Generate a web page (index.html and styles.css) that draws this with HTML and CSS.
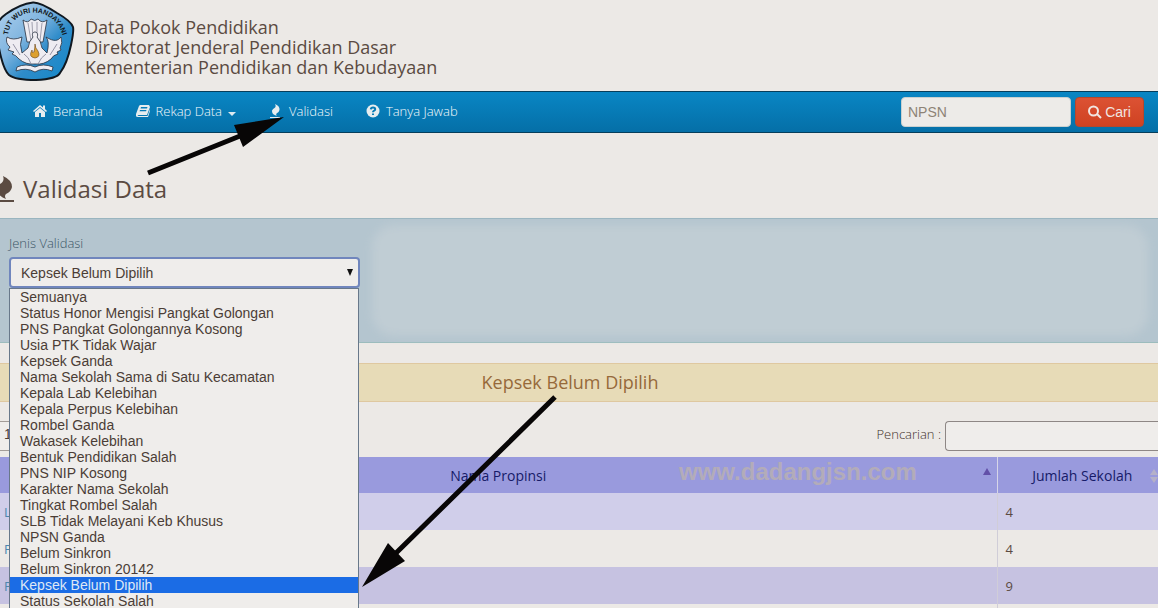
FILE: index.html
```html
<!DOCTYPE html>
<html lang="id">
<head>
  <meta charset="UTF-8">
  <meta name="viewport" content="width=device-width, initial-scale=1.0">
  <title>Validasi Data - Data Pokok Pendidikan</title>
  <link rel="stylesheet" href="styles.css">
</head>
<body>
  <header class="site-header">
    <svg class="logo" viewBox="0 0 76 84" role="img" aria-label="Tut Wuri Handayani">
      <defs>
        <linearGradient id="logoBlue" x1="0" y1="0" x2="1" y2="1">
          <stop offset="0" stop-color="#b5d4ef"/>
          <stop offset=".4" stop-color="#7fb4df"/>
          <stop offset=".62" stop-color="#2f8cca"/>
          <stop offset="1" stop-color="#1187c9"/>
        </linearGradient>
        <path id="logoArc" d="M8 35 C11 5 59 3 64 42"/>
      </defs>
      <path d="M-3 25 Q-1 19 6 14 Q20 4 33 2.500 Q40 2 57 13 Q71 21 73 27 Q74 31 71 45 Q67 64 60 73 Q57 79 36 80 Q15 80 9 75 Q3 69 -1 48 Q-4 32 -3 25Z" fill="url(#logoBlue)" stroke="#101820" stroke-width="2"/>
      <text class="logo-text"><textPath href="#logoArc">TUT WURI HANDAYANI</textPath></text>
      <g fill="#eeecf2" stroke="#27303f" stroke-width=".8" stroke-linejoin="round">
        <path d="M23 20 Q28 24 31 19 Q35 22 38 19 Q42 24 47 20 L43 42 H27Z"/>
        <path d="M28 23 L31 41 M32 22 L33 41 M37 22 L37 41 M42 23 L40 41" fill="none" stroke="#8b8b9c"/>
        <path d="M35 32 C38 32 38 36 37 37 Q41 41 42 48 L47 53 Q50 41 46 37 C54 42 58 41 61 37 Q63 43 60 48 L61 50 L57 52 L58 54 Q53 55 51 59 Q44 65 35 64 Q26 65 19 59 Q16 55 12 54 L14 52 L8 50 L10 47 Q5 43 7 37 Q13 41 22 37 Q19 44 22 53 L28 48 Q29 41 33 37 C32 35 32 32 35 32Z"/>
        <path d="M24 54 Q29 57 31 64 M46 54 Q41 57 38 64 M13 44 L20 55 M57 44 L50 55" fill="none" stroke="#7d7c92"/>
        <path d="M17 67 Q26 63 35 67 Q43 63 53 67 L52 71 Q43 67 35 72 Q26 67 16 71Z"/>
      </g>
      <path d="M35 44 Q35 48 38 51 Q41 57 35 58 Q28 57 32 50 Q32 54 34 52 Q35 48 35 44Z" fill="#dda02e" stroke="#674217" stroke-width=".6"/>
    </svg>
    <div class="site-name">
      Data Pokok Pendidikan<br>
      Direktorat Jenderal Pendidikan Dasar<br>
      Kementerian Pendidikan dan Kebudayaan
    </div>
  </header>

  <nav class="navbar">
    <a href="#"><svg class="icon" viewBox="0 0 14 14"><path d="M7 1 L0 7 L1 8 L7 3 L13 8 L14 7 L12 5 V1.500 H10 V3.500Z M7 4 L2 8 V13 H6 V9 H8 V13 H12 V8Z"/></svg>Beranda</a>
    <a href="#"><svg class="icon" viewBox="0 0 14 14"><path fill-rule="evenodd" d="M4 1 H13 L14 3 L11 11 H2 Q1 12 3 12 H11.500 L14 5 V7 L12 13 H2 Q-1 13 0 10 L3 2Z M5 3 L4.500 4.500 H11 L11.500 3Z M4 6 L3.500 7.200 H10 L10.500 6Z"/></svg>Rekap Data<span class="caret"></span></a>
    <a href="#"><svg class="icon" viewBox="0 0 14 14"><path d="M6 0 Q11 2 10.500 6 Q10 8.500 7.500 9.500 Q6.500 11 8 12 Q2.500 10.500 3 6.500 Q4 4.500 5.500 4 Q7.500 2.500 6 0Z M1 13 H11 V14 H1Z"/></svg>Validasi</a>
    <a href="#"><svg class="icon" viewBox="0 0 14 14"><circle cx="7" cy="7" r="6.500"/><path class="icon-line" d="M4.800 5.300 Q5 3.500 7 3.500 Q9.200 3.500 9.200 5.200 Q9.200 6.300 7.800 6.900 Q7 7.300 7 8.300 M7 9.400 V11"/></svg>Tanya Jawab</a>
    <form class="search">
      <input type="text" placeholder="NPSN" aria-label="NPSN">
      <button type="button"><svg class="icon" viewBox="0 0 14 14"><path class="icon-search" d="M10 6 A4.500 4.500 0 1 1 1 6 A4.500 4.500 0 1 1 10 6Z M9 9 L13 13"/></svg>Cari</button>
    </form>
  </nav>

  <main>
    <h1 class="page-title">
      <svg class="title-icon" viewBox="0 0 16 28"><path d="M3 1 Q12 5 12 12 Q11 17 6 19 Q4 21 6 24 Q-3 20 -4 14 Q-4 11 0 9 Q5 6 3 1Z M-6 25 H14 V27 H-6Z"/></svg>
      Validasi Data
    </h1>

    <section class="filter-panel">
      <div class="field">
        <label for="jenis">Jenis Validasi</label>
        <div class="dropdown">
          <select id="jenis">
            <option>Kepsek Belum Dipilih</option>
          </select>
          <ul class="options" role="listbox" aria-label="Jenis Validasi">
            <li role="option">Semuanya</li>
            <li role="option">Status Honor Mengisi Pangkat Golongan</li>
            <li role="option">PNS Pangkat Golongannya Kosong</li>
            <li role="option">Usia PTK Tidak Wajar</li>
            <li role="option">Kepsek Ganda</li>
            <li role="option">Nama Sekolah Sama di Satu Kecamatan</li>
            <li role="option">Kepala Lab Kelebihan</li>
            <li role="option">Kepala Perpus Kelebihan</li>
            <li role="option">Rombel Ganda</li>
            <li role="option">Wakasek Kelebihan</li>
            <li role="option">Bentuk Pendidikan Salah</li>
            <li role="option">PNS NIP Kosong</li>
            <li role="option">Karakter Nama Sekolah</li>
            <li role="option">Tingkat Rombel Salah</li>
            <li role="option">SLB Tidak Melayani Keb Khusus</li>
            <li role="option">NPSN Ganda</li>
            <li role="option">Belum Sinkron</li>
            <li role="option">Belum Sinkron 20142</li>
            <li role="option" class="selected" aria-selected="true">Kepsek Belum Dipilih</li>
            <li role="option">Status Sekolah Salah</li>
          </ul>
        </div>
      </div>
      <div class="panel-glow"></div>
    </section>

    <h2 class="alert">Kepsek Belum Dipilih</h2>

    <div class="table-tools">
      <select class="page-length" aria-label="Jumlah baris">
        <option>10</option>
      </select>
      <label for="cari">Pencarian :</label>
      <input type="text" id="cari">
    </div>

    <table>
      <thead>
        <tr>
          <th>Nama Propinsi<span class="sort-up"></span></th>
          <th class="count">Jumlah Sekolah<svg class="sort-both" viewBox="0 0 8 14"><path d="M4 0 L8 6 H0Z M4 14 L8 8 H0Z"/></svg></th>
        </tr>
      </thead>
      <tbody>
        <tr><td><a href="#">L</a></td><td>4</td></tr>
        <tr><td><a href="#">P</a></td><td>4</td></tr>
        <tr><td><a href="#">P</a></td><td>9</td></tr>
        <tr><td></td><td></td></tr>
      </tbody>
    </table>
  </main>

  <div class="watermark">www.dadangjsn.com</div>

  <svg class="arrows" width="1158" height="608" aria-hidden="true">
    <path d="M148 173 L245 134 M555 397 L394 555"/>
    <path class="arrow-head" d="M284 117 L234 125 L243 147Z M362 587 L388 543 L405 561Z"/>
  </svg>
</body>
</html>
```

FILE: styles.css
```css
* {
  box-sizing: border-box;
}
body {
  position: relative;
  height: 100vh;
  margin: 0;
  overflow: hidden;
  background: #ece9e6;
  color: #5b4b42;
  font-family: "Open Sans", "Noto Sans", sans-serif;
  font-size: 13px;
}
input, select, button {
  font-family: "Liberation Sans", Arial, sans-serif;
  font-size: 14px;
  color: #4b3d36;
}

/* header */
.site-header {
  display: flex;
  gap: 9px;
  height: 91px;
}
.logo {
  width: 76px;
  height: 84px;
}
.logo-text {
  font: bold 7px "Liberation Sans", sans-serif;
  fill: #101820;
}
.site-name {
  padding-top: 17px;
  font-size: 18px;
  line-height: 20px;
}

/* navigation */
.navbar {
  display: flex;
  align-items: center;
  gap: 33px;
  height: 42px;
  padding: 0 14px 0 33px;
  border-top: 1px solid #063e5b;
  border-bottom: 1px solid #063e5b;
  background: linear-gradient(#0986c4, #056fa7);
}
.navbar a {
  display: flex;
  align-items: center;
  gap: 6px;
  padding-bottom: 2px;
  color: #f4fafc;
  font-weight: 300;
  text-decoration: none;
}
.icon {
  width: 14px;
  height: 14px;
  fill: #e7edef;
}
.icon-line {
  fill: none;
  stroke: #087bb5;
  stroke-width: 2;
}
.icon-search {
  fill: none;
  stroke: #f1e6e1;
  stroke-width: 2;
}
.caret {
  margin-top: 5px;
  border: 4px solid transparent;
  border-top-color: #dceaf0;
  border-bottom: 0;
}
.search {
  display: flex;
  gap: 4px;
  margin-left: auto;
}
.search input {
  width: 170px;
  height: 30px;
  padding: 0 6px;
  border: 1px solid #c9d0d0;
  border-radius: 4px;
  background: #edebe8;
}
.search input::placeholder {
  color: #8d8376;
}
.search button {
  display: flex;
  align-items: center;
  justify-content: center;
  gap: 3px;
  width: 69px;
  height: 30px;
  padding: 0;
  border: 1px solid #b5472d;
  border-radius: 4px;
  background: linear-gradient(#dc5233, #cf4222);
  color: #f1e6e1;
}

/* content */
.page-title {
  display: flex;
  align-items: center;
  gap: 7px;
  height: 85px;
  margin: 0;
  padding-top: 26px;
  font-size: 24px;
  font-weight: 400;
}
.title-icon {
  width: 16px;
  height: 28px;
  fill: #5b4b42;
}
.filter-panel {
  display: flex;
  height: 125px;
  padding: 0 8px 0 9px;
  border-top: 1px solid #9ab5bf;
  border-bottom: 1px solid #9cbcbd;
  background: #b4c5cf;
}
.field {
  width: 351px;
  padding-top: 15px;
}
.field label {
  display: block;
  height: 23px;
  color: #3c5666;
  font-weight: 300;
  line-height: 19px;
}
.panel-glow {
  flex: 1;
  margin: 14px 10px 14px 20px;
  border-radius: 14px;
  background: #c0cdd4;
  box-shadow: 0 0 10px 8px #c0cdd4;
}
.dropdown {
  position: relative;
}
.dropdown select {
  display: block;
  width: 100%;
  height: 31px;
  padding: 0 10px;
  border: 2px solid #7086bd;
  border-radius: 4px;
  appearance: none;
  background: #efedeb;
}
.dropdown::after {
  content: "";
  position: absolute;
  top: 12px;
  right: 7px;
  border: 3px solid transparent;
  border-top: 7px solid #111;
  border-bottom: 0;
}
.options {
  position: absolute;
  top: 31px;
  left: 0;
  z-index: 2;
  width: 350px;
  margin: 0;
  padding: 0;
  border: 1px solid #68788a;
  background: #efedeb;
  color: #4b3d36;
  font: 14px/16px "Liberation Sans", Arial, sans-serif;
  list-style: none;
}
.options li {
  padding-left: 10px;
}
.options .selected {
  background: #1b6ce5;
  color: #dfe8f5;
}
.alert {
  height: 39px;
  margin: 20px 0 19px;
  padding-right: 18px;
  border-top: 1px solid #dfc8a0;
  border-bottom: 1px solid #dfc8a0;
  background: #e7dbb7;
  color: #96693a;
  font-size: 18px;
  font-weight: 400;
  line-height: 37px;
  text-align: center;
}
.table-tools {
  display: flex;
  align-items: center;
  height: 30px;
  margin-bottom: 6px;
}
.page-length {
  width: 70px;
  height: 30px;
  margin-right: auto;
  padding-bottom: 4px;
  border: 1px solid #a39c98;
  border-left: 0;
  background: #efedeb;
}
.table-tools label {
  margin-right: 4px;
  padding-bottom: 4px;
  color: #3f322b;
  font-weight: 300;
}
.table-tools input {
  width: 213px;
  height: 30px;
  border: 1px solid #8e8785;
  border-right: 0;
  border-radius: 4px 0 0 4px;
  background: #efedeb;
}

/* table */
table {
  width: 100%;
  border-collapse: collapse;
}
th {
  position: relative;
  height: 36px;
  padding: 0;
  background: #999add;
  color: #161b68;
  font-size: 14px;
  font-weight: 400;
}
.count {
  width: 161px;
  padding-left: 9px;
}
td {
  height: 37px;
  padding: 0 4px;
}
td + td {
  padding-left: 8px;
  border-left: 1px solid #d0cdd8;
}
th + th {
  border-left: 1px solid #d6d5e8;
}
td a {
  color: #4d86ae;
  text-decoration: none;
}
tbody tr:nth-child(odd) {
  background: #d0ceea;
}
tbody tr:nth-child(3) {
  background: #c6c2e1;
}
.sort-up {
  position: absolute;
  top: 11px;
  right: 6px;
  border: 4px solid transparent;
  border-top: 0;
  border-bottom: 7px solid #6250a8;
}
.sort-both {
  position: absolute;
  top: 12px;
  right: 0;
  width: 8px;
  height: 14px;
  fill: #b5b1c8;
}

/* notes drawn over the page */
.watermark {
  position: absolute;
  top: 459px;
  left: 679px;
  color: #b3acb9;
  font: bold 24px/26px "Liberation Sans", Arial, sans-serif;
}
.arrows {
  position: absolute;
  top: 0;
  left: 0;
  z-index: 3;
  fill: none;
  stroke: #080606;
  stroke-width: 5;
  pointer-events: none;
}
.arrow-head {
  fill: #080606;
  stroke: none;
}
```
